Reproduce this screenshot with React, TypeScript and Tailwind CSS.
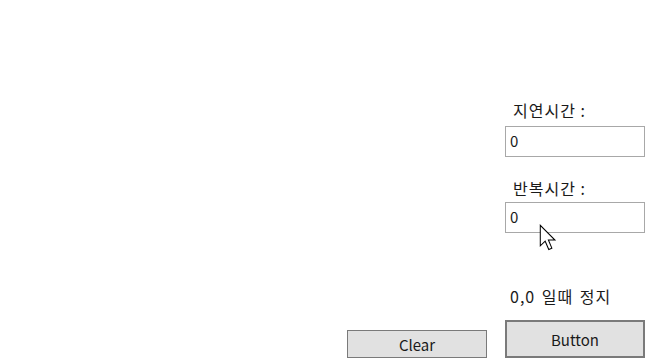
const font = { fontFamily: '"Noto Sans CJK KR", "Noto Sans", sans-serif' };

function Cursor() {
  return (
    <svg
      className="absolute left-[539px] top-[224px]"
      width="18"
      height="27"
      viewBox="0 0 14 21"
    >
      <path
        d="M1 1 L1 17 L4.8 13.4 L7.6 19.8 L10 18.8 L7.3 12.5 L12.4 12.5 Z"
        fill="#fff"
        stroke="#000"
        strokeWidth="0.8"
        strokeLinejoin="miter"
      />
    </svg>
  );
}

export default function App() {
  return (
    <div
      className="relative w-[656px] h-[360px] bg-white text-[#1a1a1a] flex justify-end items-end gap-[18px] pr-[11px]"
      style={font}
    >
      {/* clear button, bottom left of the panel */}
      <button className="mb-[2px] w-[140px] h-[28px] bg-[#e1e1e1] border border-[#7a7a7a] text-[15px] leading-none text-[#1a1a1a]">
        Clear
      </button>

      {/* right column */}
      <div className="w-[140px] h-[360px] flex flex-col pt-[99px]">
        <div className="h-[22px] leading-[22px] pl-[8px] text-[16px] tracking-[1px]">지연시간 :</div>
        <div className="mt-[5px] h-[31px] border border-[#a8a8a8] bg-white pl-[4px] text-[15px] leading-[28px]">
          0
        </div>

        <div className="mt-[20px] h-[22px] leading-[22px] pl-[8px] text-[16px] tracking-[1px]">반복시간 :</div>
        <div className="mt-[3px] h-[31px] border border-[#a8a8a8] bg-white pl-[4px] text-[15px] leading-[28px]">
          0
        </div>

        <div className="mt-[53px] h-[20px] leading-[20px] pl-[5px] text-[16px] tracking-[1px] [word-spacing:2px]">
          0,0 일때 정지
        </div>

        <button className="mt-[14px] h-[38px] w-[140px] bg-[#e1e1e1] border-2 border-[#7a7a7a] text-[15px] leading-none text-[#1a1a1a]">
          Button
        </button>
      </div>

      <Cursor />
    </div>
  );
}
